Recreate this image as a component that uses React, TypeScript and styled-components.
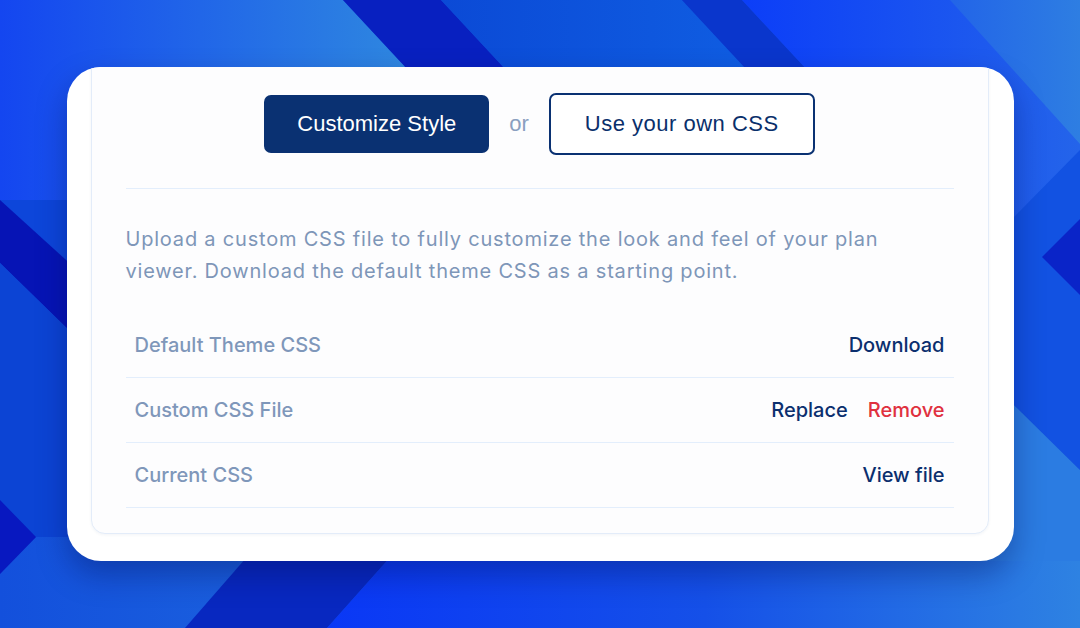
import React from 'react';
import styled, { createGlobalStyle } from 'styled-components';

const GlobalStyle = createGlobalStyle`
  html, body, #root {
    margin: 0;
    height: 100%;
  }
  body {
    font-family: Inter, "Noto Sans", sans-serif;
    background: #1048e6;
  }
`;

const Page = styled.main`
  position: relative;
  height: 100vh;
  display: flex;
  align-items: center;
  justify-content: center;
  overflow: hidden;
`;

const Backdrop = styled.svg`
  position: absolute;
  inset: 0;
  width: 100%;
  height: 100%;
  z-index: 0;
`;

const Card = styled.section`
  position: relative;
  z-index: 1;
  box-sizing: border-box;
  width: 947px;
  height: 494px;
  padding: 0 25px 27px 24px;
  display: flex;
  flex-direction: column;
  justify-content: flex-end;
  overflow: hidden;
  background: #ffffff;
  border-radius: 34px;
  box-shadow: 0 14px 30px rgba(2, 12, 80, 0.35);
`;

const Panel = styled.div`
  flex-shrink: 0;
  padding: 40px 34px 25px;
  background: #fdfdfe;
  border: 1px solid #e3ecf9;
  border-radius: 14px;
  box-shadow: 0 1px 3px rgba(30, 60, 120, 0.06);
`;

const ChoiceBar = styled.div`
  display: flex;
  align-items: center;
  justify-content: center;
  gap: 20px;
  padding-bottom: 33px;
  border-bottom: 1px solid #e3eefc;
`;

const ModeButton = styled.button<{ $active?: boolean }>`
  font-family: "Liberation Sans", Arial, sans-serif;
  font-size: 22px;
  line-height: 26px;
  border-radius: 7px;
  cursor: pointer;
  padding: ${(p) => (p.$active ? '16px 33px' : '16px 34px')};
  letter-spacing: ${(p) => (p.$active ? '0' : '0.5px')};
  border: ${(p) => (p.$active ? 'none' : '2px solid #0a3172')};
  background: ${(p) => (p.$active ? '#0a3172' : '#ffffff')};
  color: ${(p) => (p.$active ? '#ffffff' : '#0a2f6b')};
`;

const Or = styled.span`
  font-family: "Liberation Sans", Arial, sans-serif;
  font-size: 22px;
  color: #8a9fc0;
`;

const Intro = styled.p`
  max-width: 800px;
  margin: 34px 0 26px;
  font-size: 20px;
  line-height: 32px;
  letter-spacing: 0.8px;
  color: #7e96b8;
`;

const Row = styled.div`
  display: flex;
  align-items: center;
  justify-content: space-between;
  padding: 17px 9px;
  line-height: 30px;
  border-bottom: 1px solid #e3eefc;
`;

const Label = styled.span`
  font-size: 20px;
  font-weight: 500;
  color: #7f97ba;
`;

const Actions = styled.div`
  display: flex;
  gap: 20px;
`;

const Action = styled.a<{ $danger?: boolean }>`
  font-size: 20px;
  font-weight: 500;
  text-decoration: none;
  cursor: pointer;
  color: ${(p) => (p.$danger ? '#e0313f' : '#0b2f6e')};
`;

type FileRow = {
  label: string;
  actions: { text: string; danger?: boolean }[];
};

const rows: FileRow[] = [
  { label: 'Default Theme CSS', actions: [{ text: 'Download' }] },
  { label: 'Custom CSS File', actions: [{ text: 'Replace' }, { text: 'Remove', danger: true }] },
  { label: 'Current CSS', actions: [{ text: 'View file' }] },
];

const Background = () => (
  <Backdrop viewBox="0 0 1080 628" preserveAspectRatio="none" aria-hidden="true">
    <defs>
      <linearGradient id="topLeft" x1="0" y1="0" x2="400" y2="0" gradientUnits="userSpaceOnUse">
        <stop offset="0" stopColor="#1446f0" />
        <stop offset="1" stopColor="#2e86e0" />
      </linearGradient>
      <linearGradient id="topMid" x1="441" y1="0" x2="860" y2="0" gradientUnits="userSpaceOnUse">
        <stop offset="0" stopColor="#0b4ad6" />
        <stop offset="1" stopColor="#1164e6" />
      </linearGradient>
      <linearGradient id="topRight" x1="742" y1="0" x2="1080" y2="0" gradientUnits="userSpaceOnUse">
        <stop offset="0" stopColor="#0c3ef8" />
        <stop offset="1" stopColor="#2464ea" />
      </linearGradient>
      <linearGradient id="corner" x1="950" y1="0" x2="1080" y2="0" gradientUnits="userSpaceOnUse">
        <stop offset="0" stopColor="#2264e8" />
        <stop offset="1" stopColor="#2e7ee2" />
      </linearGradient>
      <linearGradient id="bottom" x1="330" y1="0" x2="1080" y2="0" gradientUnits="userSpaceOnUse">
        <stop offset="0" stopColor="#0a38f6" />
        <stop offset="0.5" stopColor="#1550e8" />
        <stop offset="1" stopColor="#2e82e2" />
      </linearGradient>
      <linearGradient id="bottomLeft" x1="0" y1="0" x2="250" y2="0" gradientUnits="userSpaceOnUse">
        <stop offset="0" stopColor="#1350dc" />
        <stop offset="1" stopColor="#1a5fde" />
      </linearGradient>
    </defs>
    <rect width="1080" height="628" fill="#0d46da" />
    <polygon points="0,0 343,0 529,200 0,200" fill="url(#topLeft)" />
    <polygon points="343,0 441,0 627,200 529,200" fill="#0820c0" />
    <polygon points="441,0 682,0 868,200 627,200" fill="url(#topMid)" />
    <polygon points="682,0 742,0 928,200 868,200" fill="#0a36cc" />
    <polygon points="742,0 1080,0 1080,320 928,200" fill="url(#topRight)" />
    <polygon points="950,0 1080,0 1080,144" fill="url(#corner)" />
    <polygon points="1080,150 960,272 960,352 1080,470" fill="#1252e2" />
    <polygon points="1042,257 1080,219 1080,295" fill="#0a24c8" />
    <polygon points="0,200 120,309 120,380 0,263" fill="#0614b5" />
    <polygon points="0,263 120,380 120,628 0,628" fill="#0c44d4" />
    <polygon points="0,574 36,537 120,537 120,561 300,561 185,628 0,628" fill="url(#bottomLeft)" />
    <polygon points="314,480 459,480 327,628 185,628" fill="#0828c0" />
    <polygon points="459,480 1080,480 1080,628 327,628" fill="url(#bottom)" />
    <polygon points="960,352 1080,470 1080,561 960,561" fill="#2b7ce2" />
    <polygon points="0,500 36,537 0,574" fill="#0818c0" />
  </Backdrop>
);

const App: React.FC = () => {
  return (
    <>
      <GlobalStyle />
      <Page>
        <Background />
        <Card>
          <Panel>
            <ChoiceBar>
              <ModeButton type="button" $active>
                Customize Style
              </ModeButton>
              <Or>or</Or>
              <ModeButton type="button">Use your own CSS</ModeButton>
            </ChoiceBar>

            <Intro>
              Upload a custom CSS file to fully customize the look and feel of your plan viewer. Download the
              default theme CSS as a starting point.
            </Intro>

            {rows.map((row) => (
              <Row key={row.label}>
                <Label>{row.label}</Label>
                <Actions>
                  {row.actions.map((action) => (
                    <Action key={action.text} $danger={action.danger}>
                      {action.text}
                    </Action>
                  ))}
                </Actions>
              </Row>
            ))}
          </Panel>
        </Card>
      </Page>
    </>
  );
};

export default App;
